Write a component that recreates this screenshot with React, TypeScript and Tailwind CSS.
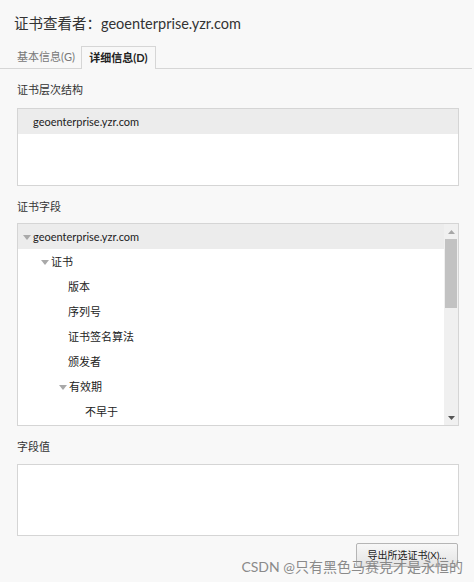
import React from "react";

const FONT = { fontFamily: 'Lato, "Noto Sans CJK SC", sans-serif' };

function Tri({ className = "" }: { className?: string }) {
  return (
    <svg width="8" height="5" viewBox="0 0 8 5" className={className}>
      <path d="M0 0 L8 0 L4 5 Z" fill="#a9a9a9" />
    </svg>
  );
}

type Row = { text: string; indent: number; arrow: boolean; sel?: boolean };

const rows: Row[] = [
  { text: "geoenterprise.yzr.com", indent: 0, arrow: true, sel: true },
  { text: "证书", indent: 1, arrow: true },
  { text: "版本", indent: 2, arrow: false },
  { text: "序列号", indent: 2, arrow: false },
  { text: "证书签名算法", indent: 2, arrow: false },
  { text: "颁发者", indent: 2, arrow: false },
  { text: "有效期", indent: 2, arrow: true },
  { text: "不早于", indent: 3, arrow: false },
];

const indentCls = ["pl-[5px]", "pl-[23px]", "pl-[41px]", "pl-[59px]"];
const textIndentNoArrow = ["pl-[15px]", "pl-[33px]", "pl-[50px]", "pl-[67px]"];

export default function App() {
  return (
    <div
      className="relative w-[474px] h-[582px] bg-[#f8f8f8] text-[#333] overflow-hidden"
      style={FONT}
    >
      <div className="pl-[14px] pt-[13px] text-[14.5px] leading-[22px] text-[#333]">
        证书查看者：geoenterprise.yzr.com
      </div>

      <div className="mt-[12px] h-[22px] border-b border-[#d6d6d6] flex items-end pl-[12px] mr-[2px]">
        <div className="h-[21px] px-[5px] flex items-center text-[11px] text-[#777]">
          基本信息(G)
        </div>
        <div className="h-[23px] w-[75px] ml-[1px] flex items-center justify-center text-[11px] font-bold text-[#222] border border-b-0 border-[#d6d6d6] bg-[#f8f8f8] -mb-px">
          详细信息(D)
        </div>
      </div>

      <div className="pl-[17px] pr-[15px]">
        <div className="pt-[13px] text-[11px] leading-[16px] text-[#333]">证书层次结构</div>
        <div className="mt-[10px] h-[78px] border border-[#d5d5d5] bg-white">
          <div className="h-[25px] bg-[#ececec] flex items-center pl-[15px] pt-[1px] text-[11px] text-[#222]">
            geoenterprise.yzr.com
          </div>
        </div>

        <div className="pt-[13px] text-[11px] leading-[16px] text-[#333]">证书字段</div>
        <div className="mt-[8px] h-[203px] border border-[#d5d5d5] bg-white flex">
          <div className="flex-1 flex flex-col">
            {rows.map((r, i) => (
              <div
                key={i}
                className={`h-[25px] shrink-0 flex items-center pt-[2px] text-[11px] text-[#222] ${
                  r.sel ? "bg-[#ececec]" : ""
                } ${r.arrow ? indentCls[r.indent] : textIndentNoArrow[r.indent]}`}
              >
                {r.arrow && <Tri className="mr-[2px] shrink-0" />}
                <span>{r.text}</span>
              </div>
            ))}
          </div>
          <div className="w-[14px] bg-[#f0f0f0] flex flex-col items-center">
            <div className="h-[15px] flex items-center justify-center">
              <svg width="7" height="4" viewBox="0 0 7 4">
                <path d="M0 4 L7 4 L3.5 0 Z" fill="#a6a6a6" />
              </svg>
            </div>
            <div className="w-[12px] h-[69px] bg-[#c2c2c2]" />
            <div className="flex-1" />
            <div className="h-[15px] flex items-center justify-center">
              <svg width="7" height="4" viewBox="0 0 7 4">
                <path d="M0 0 L7 0 L3.5 4 Z" fill="#555" />
              </svg>
            </div>
          </div>
        </div>

        <div className="pt-[13px] text-[11px] leading-[16px] text-[#333]">字段值</div>
        <div className="mt-[9px] h-[72px] border border-[#d5d5d5] bg-white" />

        <div className="mt-[7px] flex justify-end pr-[1px]">
          <div className="w-[102px] h-[24px] border border-[#b5b5b5] rounded-[2px] bg-gradient-to-b from-[#f7f7f7] to-[#e4e4e4] flex items-center justify-center text-[10px] text-[#222]">
            导出所选证书(X)...
          </div>
        </div>
      </div>

      <div className="absolute right-[11px] top-[557px] text-[14px] leading-[20px] text-[#8a8a8a] whitespace-nowrap">
        CSDN @只有黑色马赛克才是永恒的
      </div>
    </div>
  );
}
